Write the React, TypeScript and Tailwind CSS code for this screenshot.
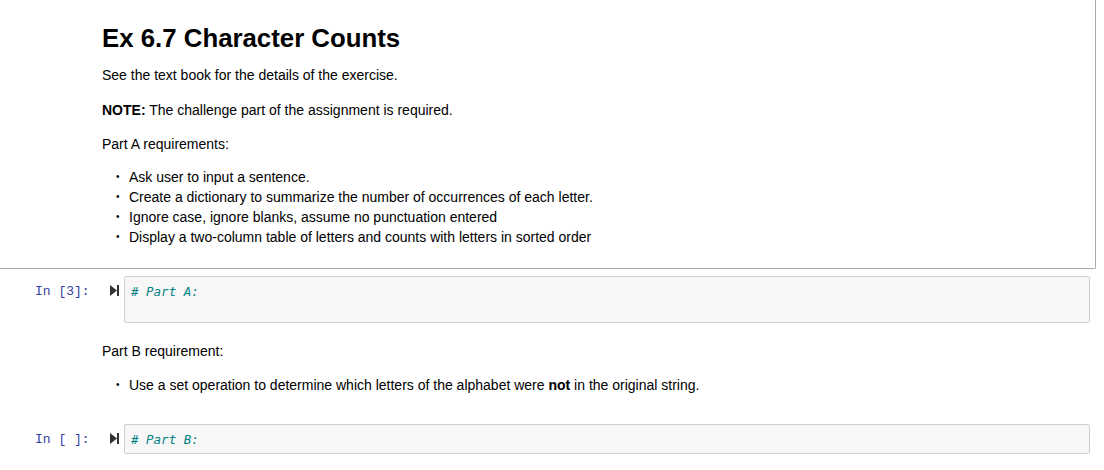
import React from "react";

const RunIcon = () => (
  <svg width="9" height="11" viewBox="0 0 9 11" className="block">
    <polygon points="0,0 7,5.5 0,11" fill="#333333" />
    <rect x="7" y="0" width="2" height="11" fill="#333333" />
  </svg>
);

const Bullet = ({ children }: { children: React.ReactNode }) => (
  <li className="flex items-center h-[20px]">
    <span className="w-[16px] pl-[14px] text-[10px] leading-none">•</span>
    <span className="pl-[11px]">{children}</span>
  </li>
);

const CodeCell = ({ prompt, code, height, top }: { prompt: string; code: string; height: string; top: string }) => (
  <div className={`flex ${top}`}>
    <div className="w-[110px] shrink-0 pl-[35px] pt-[7px] text-[13px] leading-[17px] text-[#303f9f]" style={{ fontFamily: '"Liberation Mono", monospace' }}>
      <span className="whitespace-pre">{prompt}</span>
    </div>
    <div className="w-[14px] shrink-0 pt-[9px]">
      <RunIcon />
    </div>
    <div className={`w-[966px] ${height} border border-[#cfcfcf] rounded-[2px] bg-[#f7f7f7] pl-[6px] pt-[2px]`}>
      <span className="text-[12.5px] leading-[17px] italic text-[#008080] whitespace-pre" style={{ fontFamily: '"DejaVu Sans Mono", monospace' }}>
        {code}
      </span>
    </div>
  </div>
);

export default function App() {
  return (
    <div className="w-[1104px] h-[470px] bg-white text-black overflow-hidden" style={{ fontFamily: '"Liberation Sans", Arial, sans-serif' }}>
      <div className="w-[1096px] h-[269px] border-r border-b border-[#ababab] rounded-br-[2px] pl-[102px] pt-[22px] text-[14px] leading-[20px]">
        <h1 className="text-[25.8px] leading-[32px] font-bold">Ex 6.7 Character Counts</h1>
        <p className="mt-[11px]">See the text book for the details of the exercise.</p>
        <p className="mt-[15px]"><b>NOTE:</b> The challenge part of the assignment is required.</p>
        <p className="mt-[14px]">Part A requirements:</p>
        <ul className="mt-[13px]">
          <Bullet>Ask user to input a sentence.</Bullet>
          <Bullet>Create a dictionary to summarize the number of occurrences of each letter.</Bullet>
          <Bullet>Ignore case, ignore blanks, assume no punctuation entered</Bullet>
          <Bullet>Display a two-column table of letters and counts with letters in sorted order</Bullet>
        </ul>
      </div>
      <CodeCell prompt="In [3]:" code="# Part A:" height="h-[47px]" top="mt-[7px]" />
      <div className="pl-[102px] text-[14px] leading-[20px]">
        <p className="mt-[18px]">Part B requirement:</p>
        <ul className="mt-[14px]">
          <Bullet>Use a set operation to determine which letters of the alphabet were <b>not</b> in the original string.</Bullet>
        </ul>
      </div>
      <CodeCell prompt="In [ ]:" code="# Part B:" height="h-[30px]" top="mt-[29px]" />
    </div>
  );
}
